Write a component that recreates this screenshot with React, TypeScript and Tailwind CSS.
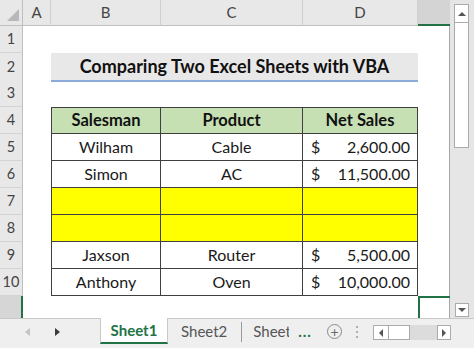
import React from "react";

const font = { fontFamily: "Lato, 'Open Sans', sans-serif" };
const grid = "grid grid-cols-[23px_28px_110px_142px_115px_32px]";

type Row = { name: string; product: string; amount: string } | "yellow";

const rows: Row[] = [
  { name: "Wilham", product: "Cable", amount: "2,600.00" },
  { name: "Simon", product: "AC", amount: "11,500.00" },
  "yellow",
  "yellow",
  { name: "Jaxson", product: "Router", amount: "5,500.00" },
  { name: "Anthony", product: "Oven", amount: "10,000.00" },
];

function RowHead({ n }: { n: number }) {
  return (
    <div className="flex items-center justify-center border-r border-b border-r-[#bfbfbf] border-b-[#d4d4d4] bg-[#e8e8e8] text-[14.5px] text-[#444]">
      {n}
    </div>
  );
}

function TableRow({ n, row }: { n: number; row: Row }) {
  const cell = "flex items-center border-r border-b border-[#3f3f3f] text-[16px] text-[#1a1a1a]";
  if (row === "yellow") {
    return (
      <div className={`${grid} h-[27px]`}>
        <RowHead n={n} />
        <div />
        <div className={`${cell} border-l bg-[#ffff00]`} />
        <div className={`${cell} bg-[#ffff00]`} />
        <div className={`${cell} bg-[#ffff00]`} />
        <div />
      </div>
    );
  }
  return (
    <div className={`${grid} h-[27px]`}>
      <RowHead n={n} />
      <div />
      <div className={`${cell} border-l justify-center`}>{row.name}</div>
      <div className={`${cell} justify-center`}>{row.product}</div>
      <div className={`${cell} justify-between pl-[8px] pr-[7px]`}>
        <span>$</span>
        <span>{row.amount}</span>
      </div>
      <div />
    </div>
  );
}

export default function App() {
  return (
    <div className="w-[474px] h-[348px] overflow-hidden bg-white" style={font}>
      <div className="flex h-[318px]">
        <div className="w-[450px] border-r border-[#a8a8a8]">
          {/* column headers */}
          <div className={`${grid} h-[26px] text-[15px] text-[#444]`}>
            <div className="relative border-r border-b border-[#bfbfbf] bg-[#e8e8e8]">
              <div className="absolute right-[3px] bottom-[4px] h-0 w-0 border-l-[12px] border-t-[12px] border-l-transparent border-t-transparent border-r-0 border-b-[12px] border-b-[#b8b8b8]" />
            </div>
            {["A", "B", "C", "D"].map((c) => (
              <div key={c} className="flex items-center justify-center border-r border-b border-r-[#d0d0d0] border-b-[#bfbfbf] bg-[#e8e8e8]">
                {c}
              </div>
            ))}
            <div className="border-b-2 border-[#217346] bg-[#d4d4d4]" />
          </div>

          {/* rows 1-3 */}
          <div className={`${grid} h-[27px]`}>
            <RowHead n={1} />
          </div>
          <div className={`${grid} h-[27px]`}>
            <RowHead n={2} />
            <div />
            <div className="col-span-3 flex items-center justify-center border-b-2 border-[#8eaadb] bg-[#e9e8e8] text-[18px] font-bold text-[#111]">
              Comparing Two Excel Sheets with VBA
            </div>
            <div />
          </div>
          <div className={`${grid} h-[27px]`}>
            <RowHead n={3} />
          </div>

          {/* header row */}
          <div className={`${grid} h-[27px]`}>
            <RowHead n={4} />
            <div />
            {["Salesman", "Product", "Net Sales"].map((h, i) => (
              <div
                key={h}
                className={`flex items-center justify-center border-t border-r border-b border-[#3f3f3f] bg-[#c6e0b4] text-[16.5px] font-bold text-[#111] ${i === 0 ? "border-l" : ""}`}
              >
                {h}
              </div>
            ))}
            <div />
          </div>

          {rows.map((r, i) => (
            <TableRow key={i} n={i + 5} row={r} />
          ))}

          {/* row 11, partial */}
          <div className={`${grid} h-[22px]`}>
            <div className="border-r-2 border-[#217346] bg-[#d6d6d6]" />
            <div />
            <div />
            <div />
            <div />
            <div className="border-t-2 border-l-2 border-[#217346]" />
          </div>
        </div>

        {/* vertical scrollbar */}
        <div className="flex w-[24px] flex-col bg-[#e6e6e6] pt-[4px] pb-[1px] pl-[4px] pr-[5px]">
          <div className="flex h-[19px] items-center justify-center border border-[#ababab] bg-white">
            <div className="h-0 w-0 border-x-[4px] border-b-[4px] border-x-transparent border-b-[#555]" />
          </div>
          <div className="h-[125px] border border-t-0 border-[#ababab] bg-white" />
          <div className="flex-1" />
          <div className="ml-[1px] flex h-[14px] items-center justify-center border border-[#ababab] bg-white">
            <div className="h-0 w-0 border-x-[4px] border-t-[4px] border-x-transparent border-t-[#555]" />
          </div>
        </div>
      </div>

      {/* sheet tabs */}
      <div className="flex h-[30px] items-start border-t border-[#c8c8c8] bg-[#efefef]">
        <div className="flex h-[25px] w-[100px] items-center">
          <div className="ml-[25px] h-0 w-0 border-y-[4px] border-r-[5px] border-y-transparent border-r-[#c4c4c4]" />
          <div className="ml-[25px] h-0 w-0 border-y-[4px] border-l-[5px] border-y-transparent border-l-[#3a3a3a]" />
        </div>
        <div className="-mt-px flex h-[26px] w-[68px] items-center justify-center border-x border-b-2 border-x-[#c8c8c8] border-b-[#217346] bg-white text-[15px] font-bold text-[#217346]">
          Sheet1
        </div>
        <div className="flex h-[25px] items-center pl-[13px] text-[15px] text-[#555]">
          <span>Sheet2</span>
          <span className="ml-[14px] h-[20px] w-px bg-[#9a9a9a]" />
          <span className="ml-[11px] w-[36px] overflow-hidden whitespace-nowrap">Sheet3</span>
          <span className="ml-[9px] text-[15px] font-bold tracking-[1px] text-[#217346]">...</span>
        </div>
        <div className="ml-[15px] mt-[5px] flex h-[15px] w-[15px] items-center justify-center rounded-full border border-[#8a8a8a] text-[14px] leading-none text-[#6a6a6a]">
          +
        </div>
        <div className="ml-[14px] mt-[7px] flex flex-col gap-[3px]">
          <span className="h-[2px] w-[2px] bg-[#b0b0b0]" />
          <span className="h-[2px] w-[2px] bg-[#b0b0b0]" />
          <span className="h-[2px] w-[2px] bg-[#b0b0b0]" />
        </div>
        <div className="ml-[15px] mt-[6px] flex h-[15px] w-[78px]">
          <div className="flex w-[16px] items-center justify-center border border-[#ababab] bg-white">
            <div className="h-0 w-0 border-y-[4px] border-r-[4px] border-y-transparent border-r-[#555]" />
          </div>
          <div className="w-[21px] border-y border-r border-[#ababab] bg-white" />
          <div className="flex-1 bg-[#dcdcdc]" />
          <div className="flex w-[14px] items-center justify-center border border-[#ababab] bg-white">
            <div className="h-0 w-0 border-y-[4px] border-l-[4px] border-y-transparent border-l-[#555]" />
          </div>
        </div>
      </div>
    </div>
  );
}
